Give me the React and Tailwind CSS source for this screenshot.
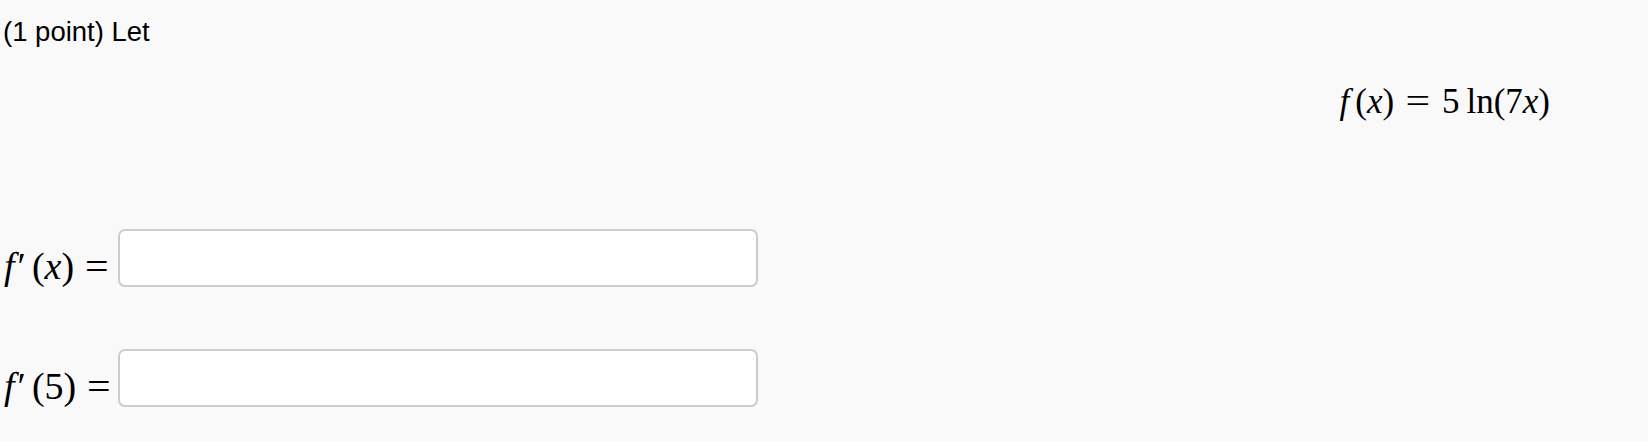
import React from "react";

function MathLabel({ arg, argItalic }) {
  return (
    <div className="w-[118px] shrink-0 pl-[4px] pb-[2px] text-[38px] leading-none text-black" style={{ fontFamily: '"Liberation Serif", serif' }}>
      <span className="italic">f</span>
      <span className="ml-[3px]">′</span>
      <span className="ml-[6px]">(</span>
      <span className={argItalic ? "italic" : ""}>{arg}</span>
      <span>)</span>
      <span className="ml-[12px] inline-block scale-x-110">=</span>
    </div>
  );
}

export default function App() {
  return (
    <div className="min-h-[442px] w-full bg-[#f9f9f9] text-black" style={{ fontFamily: '"Liberation Sans", Arial, sans-serif' }}>
      <p className="pt-[18px] pl-[3px] text-[27.5px] leading-none">(1 point) Let</p>

      <div className="flex justify-end pr-[98px] pt-[38px]">
        <div className="text-[35px] leading-none" style={{ fontFamily: '"Liberation Serif", serif' }}>
          <span className="italic">f</span>
          <span className="ml-[6px]">(</span>
          <span className="italic">x</span>
          <span>)</span>
          <span className="mx-[14px] inline-block scale-x-125">=</span>
          <span>5</span>
          <span className="ml-[7px]">ln</span>
          <span>(7</span>
          <span className="italic">x</span>
          <span>)</span>
        </div>
      </div>

      <div className="flex flex-col gap-[62px] pt-[110px]">
        <div className="flex items-end">
          <MathLabel arg="x" argItalic />
          <input type="text" className="h-[58px] w-[640px] rounded-[7px] border-2 border-[#cccccc] bg-white px-3 outline-none" />
        </div>
        <div className="flex items-end">
          <MathLabel arg="5" />
          <input type="text" className="h-[58px] w-[640px] rounded-[7px] border-2 border-[#cccccc] bg-white px-3 outline-none" />
        </div>
      </div>
    </div>
  );
}
